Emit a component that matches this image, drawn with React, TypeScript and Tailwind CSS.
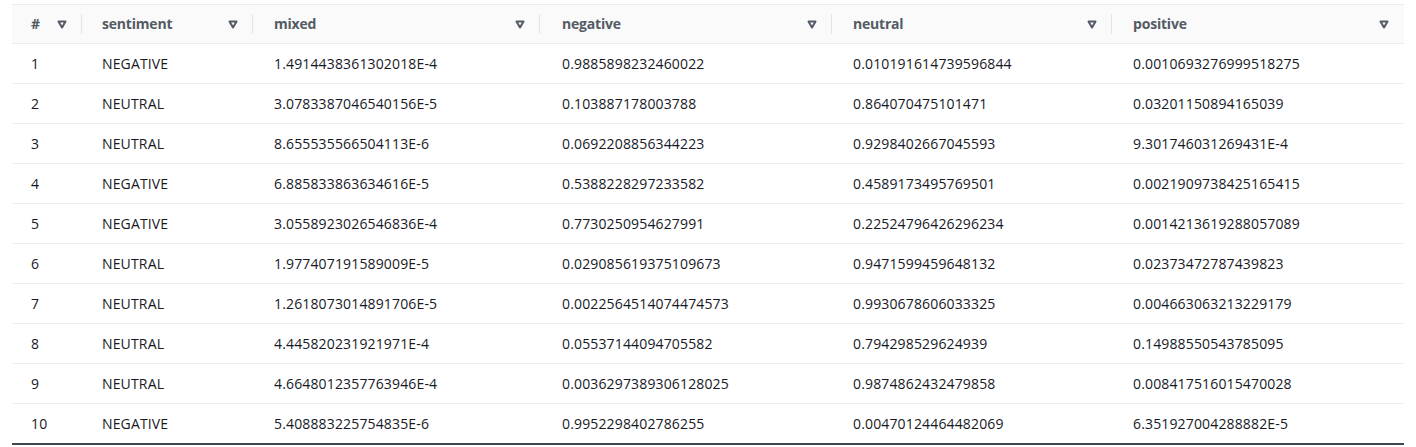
const COLUMNS = [
  { key: "#", width: "w-[70px]", pad: "pl-[19px]" },
  { key: "sentiment", width: "w-[171px]", pad: "pl-5" },
  { key: "mixed", width: "w-[287px]", pad: "pl-[21px]" },
  { key: "negative", width: "w-[292px]", pad: "pl-[22px]" },
  { key: "neutral", width: "w-[280px]", pad: "pl-[21px]" },
  { key: "positive", width: "w-[292px]", pad: "pl-[21px]" },
];

const ROWS: string[][] = [
  ["1", "NEGATIVE", "1.4914438361302018E-4", "0.9885898232460022", "0.010191614739596844", "0.0010693276999518275"],
  ["2", "NEUTRAL", "3.0783387046540156E-5", "0.103887178003788", "0.864070475101471", "0.03201150894165039"],
  ["3", "NEUTRAL", "8.655535566504113E-6", "0.0692208856344223", "0.9298402667045593", "9.301746031269431E-4"],
  ["4", "NEGATIVE", "6.885833863634616E-5", "0.5388228297233582", "0.4589173495769501", "0.0021909738425165415"],
  ["5", "NEGATIVE", "3.0558923026546836E-4", "0.7730250954627991", "0.22524796426296234", "0.0014213619288057089"],
  ["6", "NEUTRAL", "1.977407191589009E-5", "0.029085619375109673", "0.9471599459648132", "0.02373472787439823"],
  ["7", "NEUTRAL", "1.2618073014891706E-5", "0.0022564514074474573", "0.9930678606033325", "0.004663063213229179"],
  ["8", "NEUTRAL", "4.445820231921971E-4", "0.05537144094705582", "0.794298529624939", "0.14988550543785095"],
  ["9", "NEUTRAL", "4.6648012357763946E-4", "0.0036297389306128025", "0.9874862432479858", "0.008417516015470028"],
  ["10", "NEGATIVE", "5.408883225754835E-6", "0.9952298402786255", "0.00470124464482069", "6.351927004288882E-5"],
];

// outlined down-pointing caret used for the sort control
function SortIcon() {
  return (
    <svg width="10" height="9" viewBox="0 0 10 9" className="shrink-0">
      <path
        d="M1.5 1.5h7L5 7.5z"
        fill="none"
        stroke="#545b64"
        strokeWidth="2"
        strokeLinejoin="round"
      />
    </svg>
  );
}

export default function App() {
  return (
    <div className="w-[1416px] h-[447px] bg-white font-['Open_Sans',sans-serif] text-[14px]">
      <div className="pt-1 px-3">
        <div className="flex h-[40px] border-t border-b border-[#eaeded] bg-[#fafafa]">
          {COLUMNS.map((col, i) => (
            <div key={col.key} className={`${col.width} ${col.pad} flex items-center`}>
              <span className="flex-1 font-bold text-[#545b64] leading-none tracking-[-0.2px]">{col.key}</span>
              <SortIcon />
              <span className={`ml-[14px] w-px h-5 ${i < COLUMNS.length - 1 ? "bg-[#e2e5e5]" : "bg-transparent"}`} />
            </div>
          ))}
        </div>
        {ROWS.map((row, r) => (
          <div
            key={row[0]}
            className={`flex ${r === ROWS.length - 1 ? "h-[41px] border-b-2 border-[#414750]" : "h-[40px] border-b border-[#eaeded]"}`}
          >
            {row.map((cell, c) => (
              <div
                key={c}
                className={`${COLUMNS[c].width} ${COLUMNS[c].pad} flex items-center text-[#16191f] tracking-[0.15px]`}
              >
                {cell}
              </div>
            ))}
          </div>
        ))}
      </div>
    </div>
  );
}
